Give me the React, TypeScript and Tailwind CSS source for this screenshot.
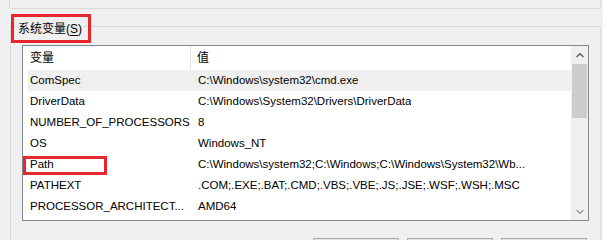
const rows: [string, string][] = [
  ['ComSpec', 'C:\\Windows\\system32\\cmd.exe'],
  ['DriverData', 'C:\\Windows\\System32\\Drivers\\DriverData'],
  ['NUMBER_OF_PROCESSORS', '8'],
  ['OS', 'Windows_NT'],
  ['Path', 'C:\\Windows\\system32;C:\\Windows;C:\\Windows\\System32\\Wb...'],
  ['PATHEXT', '.COM;.EXE;.BAT;.CMD;.VBS;.VBE;.JS;.JSE;.WSF;.WSH;.MSC'],
  ['PROCESSOR_ARCHITECT...', 'AMD64'],
];

const font = { fontFamily: '"Liberation Sans", "Noto Sans CJK SC", sans-serif' };

function Arrow({ up }: { up?: boolean }) {
  return (
    <svg width="8" height="6" viewBox="0 0 8 6" className={up ? '' : 'rotate-180'}>
      <path d="M0 4.5 L4 0.8 L8 4.5 L7 5.5 L4 2.8 L1 5.5 Z" fill={up ? '#606060' : '#9a9a9a'} />
    </svg>
  );
}

export default function App() {
  return (
    <div className="w-[603px] h-[240px] overflow-hidden bg-[#f0f0f0] text-black" style={font}>
      {/* bottom of the user variables group */}
      <div className="ml-[9px] mr-[2px] h-[9px] border-x border-b border-[#dcdcdc]" />

      <div className="relative mt-[17px] ml-[10px] mr-[2px] h-[300px] border-x border-t border-[#dcdcdc] pl-[11px] pt-[18px]">
        <div className="absolute left-0 -top-[13px] w-[80px] h-[29px] border-[3px] border-[#e8262d] flex items-center pl-[4px]">
          <span className="bg-[#f0f0f0] text-[12px] leading-none">
            系统变量(<span className="underline underline-offset-2">S</span>)
          </span>
        </div>

        <div className="w-[567px] h-[176px] border border-[#828790] bg-white flex">
          <div className="relative flex-1 flex flex-col">
            <div className="h-[24px] flex items-center text-[12px]">
              <div className="w-[168px] h-full pl-[7px] flex items-center border-r border-[#e5e5e5]">变量</div>
              <div className="pl-[6px]">值</div>
            </div>
            <div className="pl-[5px] text-[11.5px]">
              {rows.map(([k, v], i) => (
                <div key={k} className={`h-[21px] flex items-center ${i === 0 ? 'bg-[#efefef]' : ''}`}>
                  <div className="w-[170px] pl-[2px] whitespace-nowrap overflow-hidden">{k}</div>
                  <div className="whitespace-nowrap overflow-hidden">{v}</div>
                </div>
              ))}
            </div>
            {/* annotation around the Path row */}
            <div className="absolute left-0 top-[110px] w-[84px] h-[19px] border-[3px] border-[#e8262d]" />
          </div>
          <div className="w-[17px] bg-[#f0f0f0] flex flex-col">
            <div className="h-[17px] flex items-center justify-center">
              <Arrow up />
            </div>
            <div className="mx-[1px] mt-[1px] h-[54px] bg-[#cdcdcd]" />
            <div className="flex-1" />
            <div className="h-[17px] flex items-center justify-center">
              <Arrow />
            </div>
          </div>
        </div>

        <div className="mt-[17px] flex gap-[8px] pl-[291px]">
          {[0, 1, 2].map((t) => (
            <div key={t} className="w-[86px] h-[23px] border border-[#adadad] bg-[#e1e1e1]" />
          ))}
        </div>
      </div>
    </div>
  );
}
